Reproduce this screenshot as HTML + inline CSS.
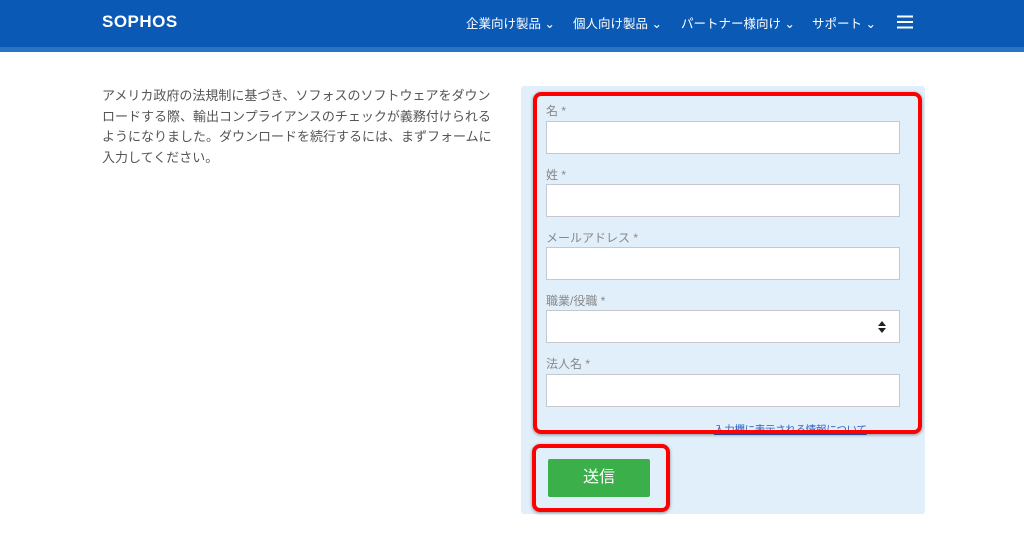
<!DOCTYPE html>
<html><head><meta charset="utf-8"><style>
*{margin:0;padding:0;box-sizing:border-box}
body{width:1024px;height:544px;background:#fff;font-family:"Liberation Sans","Noto Sans CJK JP",sans-serif;position:relative;overflow:hidden}
.hdr{position:absolute;left:0;top:0;width:1024px;height:47px;background:#0a5ab5}
.strip{position:absolute;left:0;top:47px;width:1024px;height:5px;background:#2a72c4}
.logo{position:absolute;left:102px;top:12px;color:#fff;font-weight:bold;font-size:17px;letter-spacing:0.5px}
.nav{position:absolute;top:13px;color:#fff;font-size:12.5px}
.intro{position:absolute;left:102px;top:86px;width:400px;font-size:13px;line-height:20.5px;color:#555}
.panel{position:absolute;left:521px;top:86px;width:404px;height:428px;background:#e1effb;border-radius:3px}
.lbl{position:absolute;left:546px;font-size:12px;color:#888}
.inp{position:absolute;left:546px;width:354px;height:33px;background:#fff;border:1px solid #c4c9cf}
.red{position:absolute;border:4px solid #f00;border-radius:8px;box-shadow:0 1px 3px rgba(0,0,0,.4)}
.btn{position:absolute;left:548px;top:459px;width:102px;height:38px;background:#3bb04a;border-radius:2px;color:#fff;font-size:16px;text-align:center;line-height:38px}
.link{position:absolute;left:714px;top:422px;font-size:10.5px;color:#2a62c9;text-decoration:underline;letter-spacing:-0.3px}
</style></head><body>
<div class="hdr"></div><div class="strip"></div>
<div class="logo">SOPHOS</div>
<div class="nav" style="left:466px">企業向け製品 ⌄</div>
<div class="nav" style="left:573px">個人向け製品 ⌄</div>
<div class="nav" style="left:681px">パートナー様向け ⌄</div>
<div class="nav" style="left:812px">サポート ⌄</div>
<svg style="position:absolute;left:897px;top:15px" width="16" height="14"><path d="M0 1.5H16M0 7H16M0 12.5H16" stroke="#fff" stroke-width="2"/></svg>
<div class="intro">アメリカ政府の法規制に基づき、ソフォスのソフトウェアをダウンロードする際、輸出コンプライアンスのチェックが義務付けられるようになりました。ダウンロードを続行するには、まずフォームに入力してください。</div>
<div class="panel"></div>
<div class="lbl" style="top:102px">名 *</div><div class="inp" style="top:121px"></div>
<div class="lbl" style="top:166px">姓 *</div><div class="inp" style="top:184px"></div>
<div class="lbl" style="top:229px">メールアドレス *</div><div class="inp" style="top:247px"></div>
<div class="lbl" style="top:292px">職業/役職 *</div><div class="inp" style="top:310px"></div>
<svg style="position:absolute;left:877px;top:320px" width="10" height="14"><path d="M1 6L5 1L9 6ZM1 8L5 13L9 8Z" fill="#222"/></svg>
<div class="lbl" style="top:355px">法人名 *</div><div class="inp" style="top:374px"></div>
<div class="link">入力欄に表示される情報について</div>
<div class="red" style="left:533px;top:92px;width:389px;height:342px"></div>
<div class="btn">送信</div>
<div class="red" style="left:532px;top:444px;width:138px;height:68px"></div>
</body></html>
